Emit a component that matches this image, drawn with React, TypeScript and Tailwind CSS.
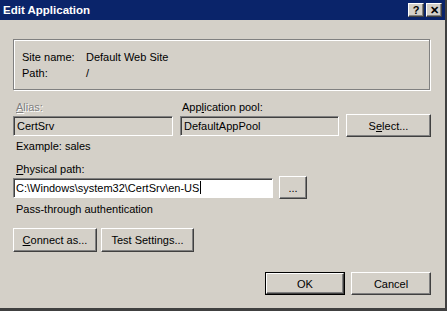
import React from 'react';

const raised =
  'bg-[#d4d0c8] border border-t-white border-l-white border-r-[#404040] border-b-[#404040] shadow-[inset_-1px_-1px_0_#808080]';
const sunken =
  'border border-t-[#808080] border-l-[#808080] border-r-white border-b-white shadow-[inset_1px_1px_0_#404040]';

function Btn({ children, className = '' }: { children: React.ReactNode; className?: string }) {
  return (
    <div className={`${raised} flex items-center justify-center ${className}`}>
      <span>{children}</span>
    </div>
  );
}

export default function App() {
  return (
    <div
      className="w-[447px] h-[311px] bg-[#d4d0c8] flex flex-col border-r-2 border-b-3 border-[#404040] text-[11px] leading-[14px] text-black overflow-hidden"
      style={{ fontFamily: '"Liberation Sans", Arial, sans-serif' }}
    >
      <div className="h-[20px] bg-[#0a246a] flex items-center justify-between pl-[3px] pr-[3px] shrink-0">
        <span className="text-white font-bold text-[11.5px]">Edit Application</span>
        <div className="flex gap-[2px]">
          <div className={`${raised} w-[16px] h-[14px] flex items-center justify-center font-bold text-[11px] leading-none`}>?</div>
          <div className={`${raised} w-[16px] h-[14px] flex items-center justify-center font-bold text-[11px] leading-none`}>✕</div>
        </div>
      </div>

      <div className="pl-[13px] pr-[14px] pt-[19px] flex flex-col">
        <div className="h-[51px] w-[417px] border border-[#808080] shadow-[inset_1px_1px_0_#fff,1px_1px_0_#fff] pl-[8px] pt-[10px] flex flex-col gap-[2px]">
          <div className="flex">
            <span className="w-[64px]">Site name:</span>
            <span>Default Web Site</span>
          </div>
          <div className="flex">
            <span className="w-[64px]">Path:</span>
            <span>/</span>
          </div>
        </div>

        <div className="flex gap-[7px] mt-[10px]">
          <span className="w-[160px] pl-[3px] text-[#808080] [text-shadow:1px_1px_0_#fff]">
            <u>A</u>lias:
          </span>
          <span className="pl-[2px]">
            App<u>l</u>ication pool:
          </span>
        </div>
        <div className="flex items-center gap-[7px]">
          <div className={`${sunken} w-[160px] h-[20px] flex items-center pl-[3px]`}>CertSrv</div>
          <div className={`${sunken} w-[159px] h-[20px] flex items-center pl-[3px]`}>DefaultAppPool</div>
          <Btn className="w-[85px] h-[23px]">
            S<u>e</u>lect...
          </Btn>
        </div>

        <div className="mt-[2px] pl-[3px]">Example: sales</div>

        <div className="mt-[9px] pl-[3px]">
          <u>P</u>hysical path:
        </div>
        <div className="flex items-center gap-[6px]">
          <div className={`${sunken} w-[260px] h-[20px] bg-white flex items-center pl-[2px]`}>
            <span>C:\Windows\system32\CertSrv\en-US</span>
            <span className="w-px h-[13px] bg-black ml-px" />
          </div>
          <Btn className="w-[28px] h-[23px]">...</Btn>
        </div>

        <div className="mt-[3px] pl-[3px]">Pass-through authentication</div>

        <div className="flex gap-[4px] mt-[12px]">
          <Btn className="w-[84px] h-[24px]">
            <u>C</u>onnect as...
          </Btn>
          <Btn className="w-[93px] h-[24px]">Test Settings...</Btn>
        </div>

        <div className="flex justify-end gap-[6px] mt-[20px]">
          <div className="border border-black">
            <Btn className="w-[78px] h-[21px]">OK</Btn>
          </div>
          <Btn className="w-[80px] h-[23px]">Cancel</Btn>
        </div>
      </div>
    </div>
  );
}
